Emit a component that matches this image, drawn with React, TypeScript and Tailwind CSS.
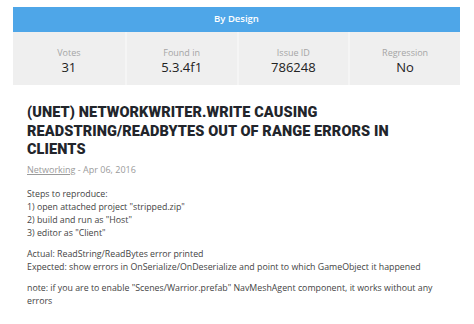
export default function App() {
  const stats = [
    { label: "Votes", value: "31" },
    { label: "Found in", value: "5.3.4f1" },
    { label: "Issue ID", value: "786248" },
    { label: "Regression", value: "No" },
  ];

  return (
    <div className="w-[474px] h-[324px] bg-white overflow-hidden pt-[7px] font-['Open_Sans',sans-serif]">
      <div className="mx-[13px] w-[447px]">
        {/* status bar */}
        <div className="h-[25px] bg-[#4ea6e8] flex items-center justify-center text-white text-[9.5px] font-semibold">
          By Design
        </div>

        {/* stats */}
        <div className="h-[53px] bg-[#efefef] grid grid-cols-4">
          {stats.map((s, i) => (
            <div
              key={s.label}
              className={
                "flex flex-col items-center justify-center pt-[5px] " +
                (i > 0 ? "border-l-2 border-[#f5f5f5]" : "")
              }
            >
              <span className="text-[9px] leading-[12px] text-[#a5a5a5]">{s.label}</span>
              <span className="text-[13px] leading-[16px] text-[#222]">{s.value}</span>
            </div>
          ))}
        </div>
      </div>

      {/* issue body */}
      <div className="pl-[27px] pr-[27px] pt-[19px]">
        <h1 className="max-w-[410px] font-['Roboto',sans-serif] font-black text-[14.5px] leading-[18.5px] tracking-[0.1px] text-[#22252b] uppercase">
          (UNET) NetworkWriter.Write causing ReadString/ReadBytes out of range errors in clients
        </h1>

        <div className="mt-[3px] text-[9px] leading-[13px] text-[#9a9a9a]">
          <span className="underline">Networking</span> - Apr 06, 2016
        </div>

        <div className="mt-[12px] text-[8.8px] leading-[13px] text-[#444]">
          <p>Steps to reproduce:</p>
          <p>1) open attached project "stripped.zip"</p>
          <p>2) build and run as "Host"</p>
          <p>3) editor as "Client"</p>
          <p className="mt-[8px]">Actual: ReadString/ReadBytes error printed</p>
          <p>Expected: show errors in OnSerialize/OnDeserialize and point to which GameObject it happened</p>
          <p className="mt-[8px]">
            note: if you are to enable "Scenes/Warrior.prefab" NavMeshAgent component, it works without any errors
          </p>
        </div>
      </div>
    </div>
  );
}
